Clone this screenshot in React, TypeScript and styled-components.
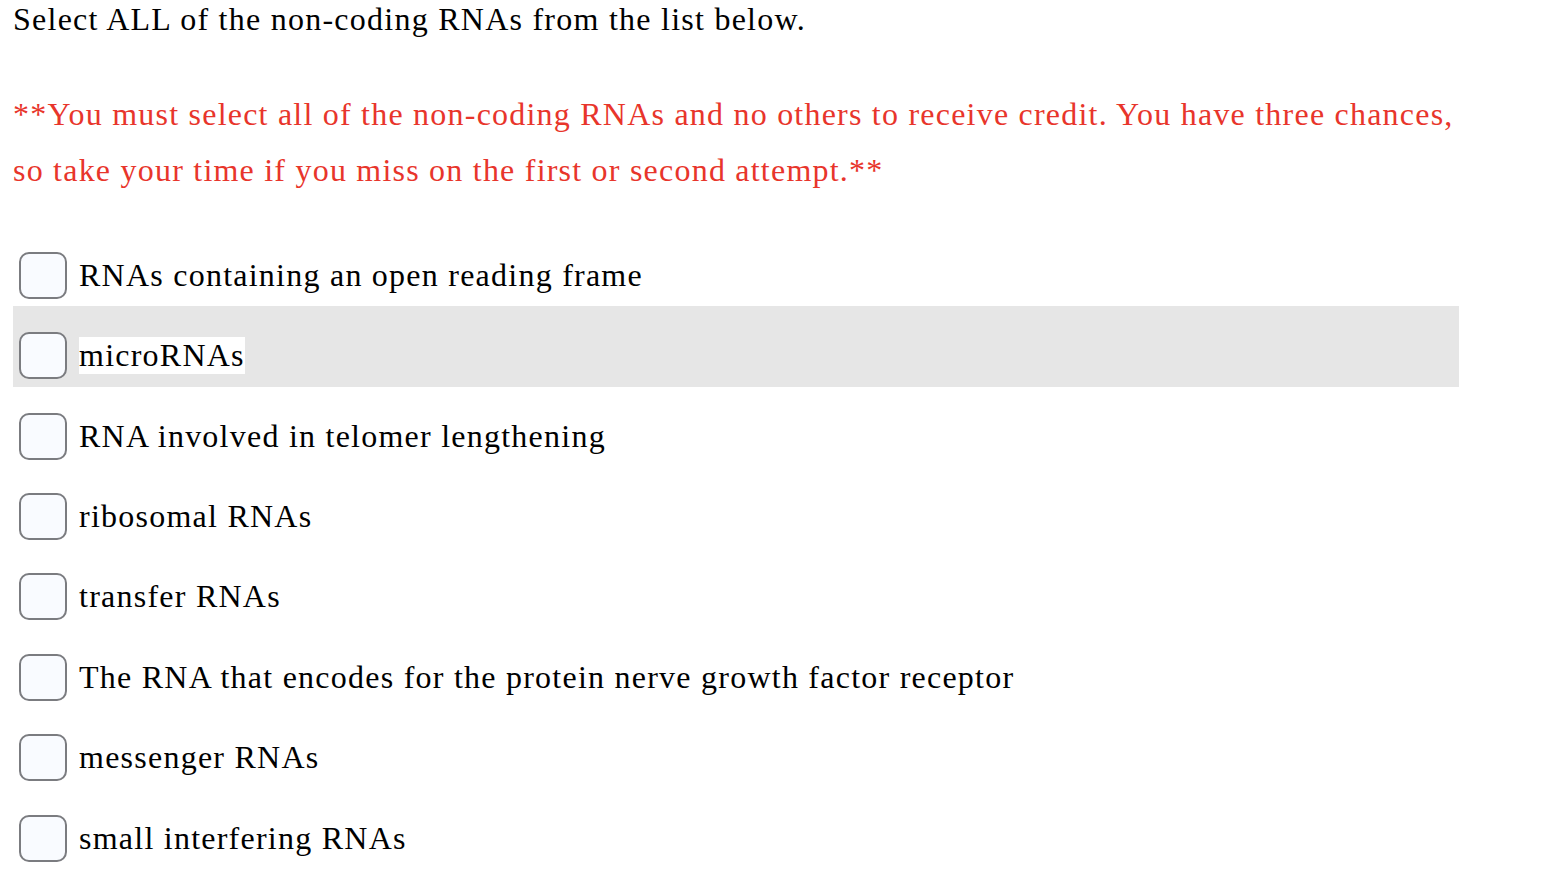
import React from "react";
import styled, { createGlobalStyle } from "styled-components";

const Global = createGlobalStyle`
  html, body { margin: 0; padding: 0; background: #ffffff; }
  body { font-family: "Liberation Serif", "Times New Roman", serif; color: #000; }
`;

const Page = styled.div`
  padding: 1px 0 0 13px;
  width: 1446px;
`;

const Title = styled.p`
  margin: 0;
  font-size: 32px;
  line-height: 37px;
  letter-spacing: 1.25px;
`;

const Note = styled.p`
  margin: 48px 0 0 0;
  font-size: 32px;
  line-height: 56px;
  letter-spacing: 1.22px;
  color: #e8352b;
`;

const List = styled.div`
  margin-top: 28px;
  display: flex;
  flex-direction: column;
`;

const Row = styled.label<{ $hover?: boolean }>`
  display: flex;
  align-items: center;
  height: 80.43px;
  box-sizing: border-box;
  padding: 18px 0 0 6px;
  background: ${(p) => (p.$hover ? "#e6e6e6" : "transparent")};
`;

const Box = styled.span`
  display: block;
  flex: none;
  width: 48px;
  height: 47px;
  box-sizing: border-box;
  border: 2px solid #7b7c80;
  border-radius: 10px;
  background: #f9fbff;
`;

const Text = styled.span`
  margin-left: 12px;
  font-size: 32px;
  line-height: 37px;
  letter-spacing: 1.24px;
  background: #ffffff;
`;

const items = [
  "RNAs containing an open reading frame",
  "microRNAs",
  "RNA involved in telomer lengthening",
  "ribosomal RNAs",
  "transfer RNAs",
  "The RNA that encodes for the protein nerve growth factor receptor",
  "messenger RNAs",
  "small interfering RNAs",
];

export default function App() {
  return (
    <>
      <Global />
      <Page>
        <Title>Select ALL of the non-coding RNAs from the list below.</Title>
        <Note>
          **You must select all of the non-coding RNAs and no others to receive credit. You have three chances,
          so take your time if you miss on the first or second attempt.**
        </Note>
        <List>
          {items.map((t, i) => (
            <Row key={t} $hover={i === 1}>
              <Box />
              <Text>{t}</Text>
            </Row>
          ))}
        </List>
      </Page>
    </>
  );
}
